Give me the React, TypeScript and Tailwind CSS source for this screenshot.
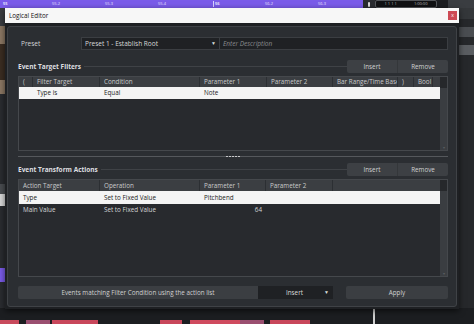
import React from 'react';

const font = { fontFamily: '"Open Sans", "Noto Sans", sans-serif' };

const f1Cols = ['(', 'Filter Target', 'Condition', 'Parameter 1', 'Parameter 2', 'Bar Range/Time Base', ')', 'Bool', ''];
const f2Cols = ['Action Target', 'Operation', 'Parameter 1', 'Parameter 2', ''];

const Btns: React.FC<{ a: string; b: string }> = ({ a, b }) => (
  <div className="flex h-[13px] w-[101px] rounded-[2px] bg-[#3d4044] text-[6.3px] text-[#cfd0d1]">
    <div className="flex flex-1 items-center justify-center border-r border-[#34373a]">{a}</div>
    <div className="flex flex-1 items-center justify-center">{b}</div>
  </div>
);

const Heading: React.FC<{ title: string; a: string; b: string }> = ({ title, a, b }) => (
  <div className="flex items-center">
    <span className="text-[6.5px] font-bold text-[#dedfe0] pr-[3px]">{title}</span>
    <div className="flex-1 h-px bg-[#3f4246]" />
    <Btns a={a} b={b} />
  </div>
);

const Scroll: React.FC = () => (
  <div className="flex w-[7px] flex-col bg-[#3a3d41]">
    <div className="h-[11px] bg-[#26282b]" />
    <div className="flex-1" />
    <div className="h-[4px] text-[4px] leading-none text-[#5c5f63] text-center">▾</div>
  </div>
);

export default function App() {
  return (
    <div className="relative h-[324px] w-[474px] overflow-hidden bg-[#1c1e21]" style={font}>
      {/* desktop behind the window */}
      <div className="flex h-full flex-col">
        <div className="flex h-[8px]">
          <div className="relative flex w-[363px] items-center bg-[#7a5be9] text-[4px] text-[#e8e3ff]">
            <span className="w-[52px] pl-[3px] font-bold">55</span>
            <span className="w-[53px]">55.2</span>
            <span className="w-[53px]">55.3</span>
            <span className="w-[55px]">55.4</span>
            <span className="w-[52px] border-l border-[#d8d0ff] pl-[1px] font-bold">56</span>
            <span className="w-[53px]">56.2</span>
            <span className="w-[40px]">56.3</span>
          </div>
          <div className="flex w-[12px] items-center justify-center bg-[#2a2c30]">
            <div className="h-[5px] w-[2px] rounded-full bg-[#d9d9d9]" />
          </div>
          <div className="flex w-[62px] items-center justify-around rounded-[2px] border border-[#55585c] bg-[#111214] text-[4px] text-[#bbb]">
            <span>1 1 1 1</span>
            <span>1:00:00</span>
          </div>
          <div className="w-[11px] bg-[#1c1e21]" />
          <div className="flex-1 bg-[#3a3d41]" />
        </div>
        <div className="flex flex-1">
          <div className="flex w-[5px] flex-col">
            <div className="h-[18px] bg-[#3a3c40]" />
            <div className="h-[18px] bg-[#8c7864]" />
            <div className="h-[36px] bg-[#3b2d22]" />
            <div className="h-[14px] bg-[#8c7864]" />
            <div className="h-[90px] bg-[#2a2c30]" />
            <div className="h-[10px] bg-[#4a4d51]" />
            <div className="h-[12px] bg-[#d8d8d8]" />
            <div className="h-[62px] bg-[#2a2c30]" />
            <div className="h-[14px] bg-[#7a5be9]" />
            <div className="flex-1 bg-[#2a2c30]" />
          </div>
          <div className="flex-1" />
          <div className="flex w-[15px] flex-col bg-[#26282b]">
            <div className="h-[11px] bg-[#34373a]" />
            <div className="mt-[8px] h-[10px] bg-[#4a4d51]" />
            <div className="mt-[8px] h-[10px] bg-[#5a5d61]" />
          </div>
        </div>
        <div className="flex h-[16px] items-end">
          <div className="flex h-[4px] w-full">
            <div className="w-[19px] bg-[#c84a5c]" />
            <div className="ml-[7px] w-[24px] bg-[#9a4f70]" />
            <div className="ml-[2px] w-[46px] bg-[#c8475b]" />
            <div className="ml-[62px] w-[22px] bg-[#c8475b]" />
            <div className="ml-[8px] w-[50px] bg-[#cf4a5e]" />
            <div className="w-[24px] bg-[#9a4f70]" />
            <div className="ml-[6px] w-[40px] bg-[#c8475b]" />
          </div>
        </div>
      </div>
      <div className="absolute left-[373px] top-[308px] h-[16px] w-[2px] bg-[#d0d0d0]" />

      {/* Logical Editor window */}
      <div className="absolute left-[5px] top-[8px] flex h-[301px] w-[454px] flex-col bg-[#1e2023] shadow-[0_2px_6px_rgba(0,0,0,0.6)]">
        <div className="flex h-[15px] items-center justify-between bg-[#f7f7f7] pl-[4px] pr-[2px]">
          <span className="text-[6.3px] text-[#111]">Logical Editor</span>
          <div className="flex h-[9px] w-[9px] items-center justify-center bg-[#cd4a55] text-[5px] leading-none text-white">x</div>
        </div>
        <div className="flex flex-1 flex-col px-[2px] pb-[2px] pt-[3px]">
          <div className="flex flex-1 flex-col rounded-[3px] border border-[#3f4246] bg-[#2b2e32] pl-[10px] pr-[8px] pt-[10px] pb-[7px]">
            {/* preset */}
            <div className="flex h-[13px] items-center text-[6.5px]">
              <span className="w-[63px] pl-[3px] text-[#d4d5d6]">Preset</span>
              <div className="flex h-full w-[139px] items-center justify-between border border-[#3b3e42] bg-[#1f2124] pl-[3px] pr-[3px] text-[#d8d9da]">
                <span>Preset 1 - Establish Root</span>
                <span className="text-[5px]">▼</span>
              </div>
              <div className="flex h-full flex-1 items-center border border-l-0 border-[#3b3e42] bg-[#1f2124] pl-[3px] italic text-[#8a8c8f]">Enter Description</div>
            </div>

            {/* filters */}
            <div className="mt-[10px]">
              <Heading title="Event Target Filters" a="Insert" b="Remove" />
            </div>
            <div className="mt-[3px] flex h-[75px] border border-[#45484c] bg-[#282a2e]">
              <div className="flex flex-1 flex-col">
                <div className="grid h-[10px] grid-cols-[14px_67px_100px_67px_66px_65px_16px_19px_1fr] bg-[#3b3e42] text-[6.3px] text-[#c9cacb]">
                  {f1Cols.map((c, i) => (
                    <div key={i} className={`flex items-center pl-[4px] whitespace-nowrap overflow-hidden ${i < 8 ? 'border-r border-[#2c2f33]' : ''}`}>{c}</div>
                  ))}
                </div>
                <div className="grid h-[12px] grid-cols-[14px_67px_100px_67px_66px_65px_16px_19px_1fr] bg-[#f4f4f4] text-[6.3px] text-[#222]">
                  <div />
                  <div className="flex items-center pl-[4px]">Type is</div>
                  <div className="flex items-center pl-[4px]">Equal</div>
                  <div className="flex items-center pl-[4px]">Note</div>
                </div>
              </div>
              <Scroll />
            </div>

            {/* splitter */}
            <div className="mt-[5px] flex h-px items-center justify-center bg-[#55585c]">
              <div className="flex gap-[1px]">
                {[0, 1, 2, 3, 4].map((i) => (
                  <div key={i} className="h-px w-[2px] bg-[#c8c9cb]" />
                ))}
              </div>
            </div>

            {/* actions */}
            <div className="mt-[6px]">
              <Heading title="Event Transform Actions" a="Insert" b="Remove" />
            </div>
            <div className="mt-[3px] flex h-[98px] border border-[#45484c] bg-[#282a2e]">
              <div className="flex flex-1 flex-col">
                <div className="grid h-[11px] grid-cols-[81px_100px_66px_67px_1fr] bg-[#3b3e42] text-[6.3px] text-[#c9cacb]">
                  {f2Cols.map((c, i) => (
                    <div key={i} className={`flex items-center pl-[4px] ${i < 4 ? 'border-r border-[#2c2f33]' : ''}`}>{c}</div>
                  ))}
                </div>
                <div className="grid h-[13px] grid-cols-[81px_100px_66px_67px_1fr] bg-[#f4f4f4] text-[6.3px] text-[#222]">
                  <div className="flex items-center pl-[4px]">Type</div>
                  <div className="flex items-center pl-[4px]">Set to Fixed Value</div>
                  <div className="flex items-center pl-[4px]">Pitchbend</div>
                </div>
                <div className="grid h-[12px] grid-cols-[81px_100px_66px_67px_1fr] text-[6.3px] text-[#d4d5d6]">
                  <div className="flex items-center pl-[4px]">Main Value</div>
                  <div className="flex items-center pl-[4px]">Set to Fixed Value</div>
                  <div className="flex items-center justify-end pr-[4px]">64</div>
                </div>
              </div>
              <Scroll />
            </div>

            {/* bottom row */}
            <div className="mt-auto flex h-[13px] items-stretch text-[6.3px]">
              <div className="flex w-[240px] items-center justify-center rounded-l-[2px] bg-[#3b3e42] text-[#cfd0d1]">Events matching Filter Condition using the action list</div>
              <div className="flex w-[75px] items-center justify-between bg-[#1f2124] pl-[28px] pr-[4px] text-[#dcdcdc]">
                <span>Insert</span>
                <span className="text-[5px]">▼</span>
              </div>
              <div className="w-[13px]" />
              <div className="flex flex-1 items-center justify-center rounded-[2px] bg-[#3b3e42] text-[#cfd0d1]">Apply</div>
            </div>
          </div>
        </div>
      </div>
    </div>
  );
}
